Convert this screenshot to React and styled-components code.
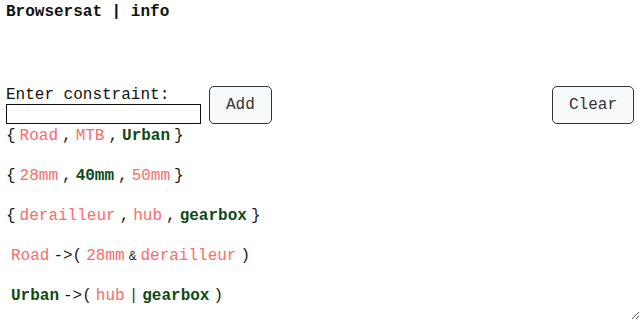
import React from "react";
import styled, { createGlobalStyle } from "styled-components";

const Global = createGlobalStyle`
  html, body { margin: 0; padding: 0; background: #fff; }
  body { font-family: "Liberation Serif", serif; font-size: 16px; color: #111; }
`;

const Page = styled.div`
  box-sizing: border-box;
  width: 640px;
  height: 320px;
  padding: 3px 6px 0 6px;
  overflow: hidden;
  resize: both;
  display: flex;
  flex-direction: column;
`;

const Header = styled.div`
  font-family: "Liberation Mono", "Courier New", monospace;
  font-weight: bold;
  font-size: 16px;
  line-height: 18px;
  color: #111;
  margin-bottom: 65px;
`;

const Toolbar = styled.div`
  display: flex;
  align-items: flex-start;
  justify-content: space-between;
`;

const Left = styled.div`
  display: flex;
  align-items: flex-start;
  gap: 8px;
`;

const Field = styled.label`
  display: flex;
  flex-direction: column;
  font-family: "Liberation Mono", "Courier New", monospace;
  font-size: 16px;
  line-height: 18px;
  color: #111;
`;

const Input = styled.input`
  box-sizing: border-box;
  width: 195px;
  height: 20px;
  margin: 0;
  border: 1px solid #111;
  padding: 1px 2px;
  font-family: "Liberation Mono", monospace;
  font-size: 13px;
  outline: none;
`;

const Button = styled.button`
  box-sizing: border-box;
  height: 38px;
  padding: 0 16px;
  margin: 0;
  border: 1px solid #333;
  border-radius: 5px;
  background: #f8f9fb;
  font-family: "Liberation Mono", "Courier New", monospace;
  font-size: 16px;
  line-height: 18px;
  color: #333;
  cursor: pointer;
`;

const List = styled.div`
  display: flex;
  flex-direction: column;
  gap: 22px;
  margin-top: 2px;
`;

const Row = styled.div`
  height: 18px;
  line-height: 18px;
  font-size: 16px;
  padding-left: ${(p) => (p.$indent ? "5px" : "0")};
  white-space: nowrap;
  overflow: visible;
`;

const Tok = styled.span`
  font-family: "Liberation Mono", "Courier New", monospace;
  font-size: ${(p) => (p.$small ? "13px" : "16px")};
  line-height: 18px;
  font-weight: ${(p) => (p.$on ? "bold" : "normal")};
  color: ${(p) =>
    p.$kind === "on" ? "#0d4a14" : p.$kind === "off" ? "#ff6b6b" : p.$kind === "bar" ? "#2a3f6a" : "#1a1a1a"};
`;

const P = ({ c }) => <Tok>{c}</Tok>;
const V = ({ on, children }) => (
  <Tok $kind={on ? "on" : "off"} $on={on}>
    {children}
  </Tok>
);

export default function App() {
  return (
    <>
      <Global />
      <Page>
        <Header>Browsersat | info</Header>
        <Toolbar>
          <Left>
            <Field>
              Enter constraint:
              <Input type="text" />
            </Field>
            <Button>Add</Button>
          </Left>
          <Button>Clear</Button>
        </Toolbar>
        <List>
          <Row>
            <P c="{" /> <V>Road</V> <P c="," /> <V>MTB</V> <P c="," />{" "}
            <V on>Urban</V> <P c="}" />
          </Row>
          <Row>
            <P c="{" /> <V>28mm</V> <P c="," /> <V on>40mm</V> <P c="," />{" "}
            <V>50mm</V> <P c="}" />
          </Row>
          <Row>
            <P c="{" /> <V>derailleur</V> <P c="," /> <V>hub</V> <P c="," />{" "}
            <V on>gearbox</V> <P c="}" />
          </Row>
          <Row $indent>
            <V>Road</V> <P c="->(" /> <V>28mm</V> <Tok $small>&amp;</Tok>{" "}
            <V>derailleur</V> <P c=")" />
          </Row>
          <Row $indent>
            <V on>Urban</V> <P c="->(" /> <V>hub</V> <Tok $kind="bar">|</Tok>{" "}
            <V on>gearbox</V> <P c=")" />
          </Row>
        </List>
      </Page>
    </>
  );
}
